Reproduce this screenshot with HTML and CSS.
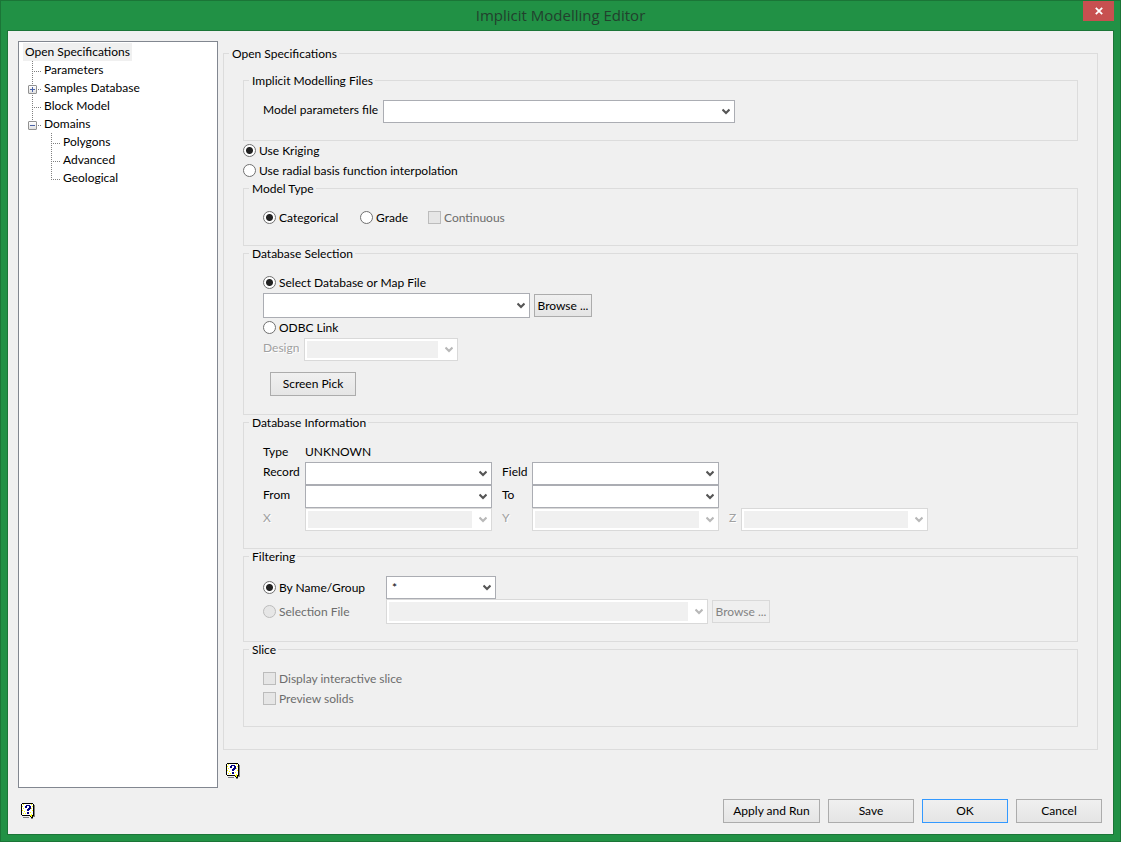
FILE: index.html
```html
<!DOCTYPE html>
<html lang="en">
<head>
  <meta charset="UTF-8">
  <meta name="viewport" content="width=device-width, initial-scale=1.0">
  <title>Implicit Modelling Editor</title>
  <link rel="stylesheet" href="styles.css">
</head>
<body>
  <!-- Help icon shared by the panel and the footer -->
  <svg class="sprite" aria-hidden="true">
    <symbol id="help-icon" viewBox="0 0 15 16" shape-rendering="crispEdges">
      <path fill="#808080" d="M13 2h1v12h-2v2h-2v-1h1v-2h2zM2 14h6v1H2z"/>
      <path fill="#000" d="M1 0h11v1h1v12h-1v2h-2v-1H9v-1H1v-1H0V1h1z"/>
      <path fill="#fff" d="M1 1h11v11H1z"/>
      <path fill="#ff0" d="M2 1h1v1H2zM10 1h1v1h-1zM1 3h1v1H1zM11 3h1v1h-1zM2 5h1v1H2zM10 5h1v1h-1zM1 7h1v1H1zM3 8h1v1H3zM11 7h1v1h-1zM2 10h1v1H2zM4 10h1v1H4zM9 9h1v1H9zM10 11h1v3h-1zM9 12h1v1H9z"/>
      <path fill="#000080" d="M5 2h4v1H5zM4 3h2v2H4zM8 3h2v3H8zM7 5h2v2H7zM6 6h2v2H6zM6 9h2v2H6z"/>
    </symbol>
  </svg>

  <div class="window">
    <header class="title-bar">
      <h1 class="title">Implicit Modelling Editor</h1>
      <button class="close" type="button" aria-label="Close">
        <svg width="8" height="8" viewBox="0 0 8 8"><path d="M0.8 0.8l6.4 6.4M7.2 0.8l-6.4 6.4" stroke="#fff" stroke-width="1.8"/></svg>
      </button>
    </header>

    <form class="client">
      <div class="main">
        <!-- Navigation tree -->
        <nav class="tree">
          <a class="node selected" href="#">Open Specifications</a>
          <ul class="branch">
            <li><a class="node" href="#">Parameters</a></li>
            <li><button class="toggle plus" type="button" aria-label="Expand"></button><a class="node" href="#">Samples Database</a></li>
            <li><a class="node" href="#">Block Model</a></li>
            <li>
              <button class="toggle" type="button" aria-label="Collapse"></button><a class="node" href="#">Domains</a>
              <ul class="branch">
                <li><a class="node" href="#">Polygons</a></li>
                <li><a class="node" href="#">Advanced</a></li>
                <li><a class="node" href="#">Geological</a></li>
              </ul>
            </li>
          </ul>
        </nav>

        <div class="panel">
          <fieldset class="group outer">
            <legend>Open Specifications</legend>
            <div class="group-body">

              <fieldset class="group">
                <legend>Implicit Modelling Files</legend>
                <div class="group-body">
                  <div class="row">
                    <label class="label-file" for="paramFile">Model parameters file</label>
                    <select class="combo combo-xl" id="paramFile"></select>
                  </div>
                </div>
              </fieldset>

              <label class="option"><input type="radio" name="method" checked>Use Kriging</label>
              <label class="option"><input type="radio" name="method">Use radial basis function interpolation</label>

              <fieldset class="group">
                <legend>Model Type</legend>
                <div class="group-body model-type">
                  <label class="option"><input type="radio" name="modelType" checked>Categorical</label>
                  <label class="option"><input type="radio" name="modelType">Grade</label>
                  <label class="option disabled"><input type="checkbox" disabled>Continuous</label>
                </div>
              </fieldset>

              <fieldset class="group">
                <legend>Database Selection</legend>
                <div class="group-body">
                  <label class="option"><input type="radio" name="source" checked>Select Database or Map File</label>
                  <div class="row middle">
                    <select class="combo combo-l tall" aria-label="Database or map file"></select>
                    <button class="btn browse" type="button">Browse ...</button>
                  </div>
                  <label class="option"><input type="radio" name="source">ODBC Link</label>
                  <div class="row">
                    <label class="label-design etched" for="design">Design</label>
                    <select class="combo combo-s" id="design" disabled></select>
                  </div>
                  <button class="btn pick" type="button">Screen Pick</button>
                </div>
              </fieldset>

              <fieldset class="group">
                <legend>Database Information</legend>
                <div class="group-body info">
                  <span>Type</span>
                  <output class="type">UNKNOWN</output>

                  <label for="record">Record</label>
                  <select class="combo" id="record"></select>
                  <label for="field">Field</label>
                  <select class="combo" id="field"></select>

                  <label class="first" for="from">From</label>
                  <select class="combo" id="from"></select>
                  <label for="to">To</label>
                  <select class="combo" id="to"></select>

                  <label class="first etched" for="x">X</label>
                  <select class="combo" id="x" disabled></select>
                  <label class="etched" for="y">Y</label>
                  <select class="combo" id="y" disabled></select>
                  <label class="etched" for="z">Z</label>
                  <select class="combo" id="z" disabled></select>
                </div>
              </fieldset>

              <fieldset class="group">
                <legend>Filtering</legend>
                <div class="group-body filter">
                  <label class="option"><input type="radio" name="filter" checked>By Name/Group</label>
                  <select class="combo combo-xs" aria-label="Name or group"><option>*</option></select>
                  <label class="option disabled"><input type="radio" name="filter" disabled>Selection File</label>
                  <div class="row middle">
                    <select class="combo combo-file tall" aria-label="Selection file" disabled></select>
                    <button class="btn browse" type="button" disabled>Browse ...</button>
                  </div>
                </div>
              </fieldset>

              <fieldset class="group">
                <legend>Slice</legend>
                <div class="group-body">
                  <label class="option disabled"><input type="checkbox" disabled>Display interactive slice</label>
                  <label class="option disabled"><input type="checkbox" disabled>Preview solids</label>
                </div>
              </fieldset>

            </div>
          </fieldset>
          <button class="help" type="button" aria-label="Panel help"><svg><use href="#help-icon"/></svg></button>
        </div>
      </div>

      <!-- Dialog buttons -->
      <footer class="footer">
        <button class="help" type="button" aria-label="Help"><svg><use href="#help-icon"/></svg></button>
        <div class="actions">
          <button class="btn wide" type="button">Apply and Run</button>
          <button class="btn" type="button">Save</button>
          <button class="btn default" type="submit">OK</button>
          <button class="btn" type="button">Cancel</button>
        </div>
      </footer>
    </form>
  </div>
</body>
</html>
```
FILE: styles.css
```css
/* General */
* {
  box-sizing: border-box;
}

body {
  margin: 0;
  font-family: Lato, "Open Sans", sans-serif;
  font-size: 12px;
  line-height: 20px;
  color: #000;
}

button, select, input {
  font: inherit;
  color: inherit;
  margin: 0;
}

label, legend, a, span {
  white-space: nowrap;
}

.sprite {
  position: absolute;
  width: 0;
  height: 0;
}

/* Window frame */
.window {
  display: flex;
  flex-direction: column;
  min-height: 100vh;
  padding: 0 6px 6px;
  border: 1px solid #1b7537;
  background-color: #219145;
}

.title-bar {
  display: grid;
  grid-template-columns: 1fr auto 1fr;
  height: 29px;
}

.title {
  grid-column: 2;
  margin: 0;
  font-family: "Open Sans", "Noto Sans", sans-serif;
  font-size: 15px;
  font-weight: normal;
  line-height: 29px;
  color: #22402d;
}

.close {
  display: flex;
  align-items: center;
  justify-content: center;
  justify-self: end;
  width: 31px;
  height: 20px;
  padding: 0;
  border: none;
  background-color: #c75050;
}

.client {
  display: flex;
  flex-direction: column;
  flex: 1;
  border: 1px solid #1b7537;
  background-color: #f0f0f0;
}

.main {
  display: grid;
  grid-template-columns: 200px 1fr;
  column-gap: 5px;
  flex: 1;
  padding: 10px 15px 0 10px;
}

/* Tree */
.tree {
  padding: 1px 4px;
  border: 1px solid #828790;
  background-color: #fff;
  line-height: 18px;
}

.node {
  display: inline-block;
  height: 18px;
  padding: 0 2px;
  color: #000;
  text-decoration: none;
  vertical-align: top;
}

.node.selected {
  background-color: #f0f0f0;
}

.branch {
  margin: 0;
  padding: 0 0 0 19px;
  list-style: none;
}

.branch li {
  position: relative;
}

/* Dotted connector lines */
.branch li::before {
  content: "";
  position: absolute;
  left: -10px;
  top: 0;
  width: 1px;
  height: 100%;
  background: repeating-linear-gradient(#808080 0 1px, transparent 1px 2px);
}

.branch li:last-child::before {
  height: 10px;
}

.branch li::after {
  content: "";
  position: absolute;
  left: -10px;
  top: 10px;
  width: 9px;
  height: 1px;
  background: repeating-linear-gradient(90deg, #808080 0 1px, transparent 1px 2px);
}

.toggle {
  position: absolute;
  z-index: 1;
  left: -14px;
  top: 6px;
  width: 9px;
  height: 9px;
  padding: 0;
  border: 1px solid #919191;
  border-radius: 1px;
  background: linear-gradient(#4b63a7, #4b63a7) 1px 3px / 5px 1px no-repeat, linear-gradient(#fff, #e0e0e0);
}

.toggle.plus {
  background: linear-gradient(#4b63a7, #4b63a7) 1px 3px / 5px 1px no-repeat, linear-gradient(#4b63a7, #4b63a7) 3px 1px / 1px 5px no-repeat, linear-gradient(#fff, #e0e0e0);
}

/* Group boxes */
.panel {
  padding: 5px 0 9px;
}

.group {
  min-width: 0;
  margin: 0;
  padding: 0 5px;
  border: 1px solid #dcdcdc;
}

.group legend {
  padding: 0 2px 0 3px;
  line-height: 15px;
}

.group-body {
  padding: 12px 14px 17px;
}

.outer > .group-body {
  padding-bottom: 22px;
}

.row {
  display: flex;
}

.row.middle {
  align-items: center;
  gap: 4px;
}

/* Radios and tick boxes */
.option {
  display: flex;
  align-items: center;
  gap: 3px;
}

.option.disabled {
  color: #6d6d6d;
}

.option input {
  appearance: none;
  flex: none;
  width: 13px;
  height: 13px;
  margin-bottom: 1px;
  border: 1px solid #707070;
  background-color: #fff;
}

.option input[type="radio"] {
  border-radius: 50%;
}

.option input:checked {
  background-image: radial-gradient(circle, #222 3px, transparent 4px);
}

.option input:disabled {
  border-color: #bcbcbc;
  background-color: #e6e6e6;
}

.etched {
  color: #a0a0a0;
  text-shadow: 1px 1px #fff;
}

/* Drop-downs */
.combo {
  appearance: none;
  width: 187px;
  height: 23px;
  padding: 0 20px 0 5px;
  border: 1px solid #abadb3;
  border-radius: 0;
  background: #fff url("data:image/svg+xml,%3Csvg xmlns='http://www.w3.org/2000/svg' width='8' height='7'%3E%3Cpath d='M0.5 1.5L4 5l3.5-3.5' fill='none' stroke='%23555' stroke-width='2.2'/%3E%3C/svg%3E") right 4px center no-repeat;
}

.combo:disabled {
  border-color: #d9d9d9;
  opacity: 1;
  background: url("data:image/svg+xml,%3Csvg xmlns='http://www.w3.org/2000/svg' width='8' height='7'%3E%3Cpath d='M0.5 1.5L4 5l3.5-3.5' fill='none' stroke='%23b8b8b8' stroke-width='2.2'/%3E%3C/svg%3E") right 4px center no-repeat, linear-gradient(#f0f0f0, #f0f0f0) 2px 2px / calc(100% - 21px) calc(100% - 4px) no-repeat #fff;
}

.tall { height: 25px; }
.combo-xs { width: 110px; }
.combo-s { width: 154px; }
.combo-l { width: 267px; }
.combo-file { width: 322px; }
.combo-xl { width: 352px; }

.label-file { width: 120px; }
.label-design { width: 41px; }

/* Buttons */
.btn {
  width: 86px;
  height: 24px;
  padding: 0;
  border: 1px solid #acacac;
  background: linear-gradient(#f0f0f0, #e5e5e5);
  line-height: 20px;
  white-space: nowrap;
}

.btn.default {
  border-color: #3399ff;
}

.btn:disabled {
  border-color: #d9d9d9;
  background: #efefef;
  color: #838383;
}

.btn.browse {
  width: 58px;
  height: 23px;
}

.btn.wide {
  width: 97px;
}

.btn.pick {
  display: block;
  margin: 11px 0 1px 7px;
}

/* Group contents */
.model-type {
  display: grid;
  grid-template-columns: 97px 68px auto;
}

.info {
  display: grid;
  grid-template-columns: 42px 197px 30px 197px 12px 187px;
}

.info .type {
  grid-column: 2 / -1;
}

.info .first {
  grid-column: 1;
}

.filter {
  display: grid;
  grid-template-columns: 123px auto;
}

/* Help buttons and footer */
.help {
  display: block;
  width: 15px;
  height: 16px;
  padding: 0;
  border: none;
  background: none;
}

.help svg {
  display: block;
  width: 15px;
  height: 16px;
}

.panel .help {
  margin: 13px 0 0 3px;
}

.footer {
  display: flex;
  align-items: center;
  justify-content: space-between;
  padding: 11px 11px 11px 13px;
}

.actions {
  display: flex;
  gap: 8px;
}
```
